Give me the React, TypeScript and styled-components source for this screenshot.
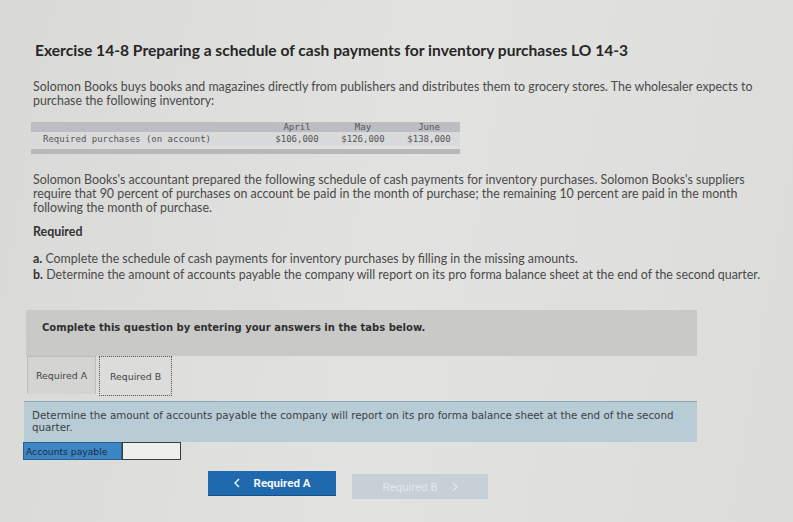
import React, { ReactElement } from 'react';
import styled, { createGlobalStyle } from 'styled-components';

const GlobalStyle = createGlobalStyle`
    html, body {
        margin: 0;
        padding: 0;
        background: #dededc;
    }
`;

const Page = styled.div`
    width: 793px;
    height: 522px;
    overflow: hidden;
    box-sizing: border-box;
    padding: 40px 0 0 0;
    background: linear-gradient(100deg, #d9d9d7 0%, #e2e2e0 50%, #dcdcda 100%);
    font-family: Lato, 'Open Sans', sans-serif;
    color: #4a4a4a;
`;

const Intro = styled.div`
    padding-left: 33px;
`;

const Title = styled.h1`
    margin: 0 0 0 2px;
    font-size: 15.6px;
    line-height: 20px;
    font-weight: 700;
    color: #262626;
`;

const Text = styled.div<{ $top: number }>`
    margin: ${(p) => p.$top}px 0 0 0;
    font-size: 12.4px;
    line-height: 14px;
`;

const Line = styled.div`
    white-space: nowrap;
`;

const Heading = styled.div`
    margin-top: 10px;
    font-size: 12.4px;
    line-height: 14px;
    font-weight: 700;
    color: #333;
`;

const List = styled.div`
    margin-top: 12px;
    font-size: 12.4px;
    line-height: 16px;
    white-space: nowrap;
`;

const Letter = styled.b`
    color: #333;
`;

const Table = styled.div`
    margin: 14px 0 0 -2px;
    width: 429px;
    font-family: 'DejaVu Sans Mono', 'Liberation Mono', monospace;
    font-size: 9px;
    color: #555;
`;

const TableRow = styled.div<{ $bg: string; $h: number }>`
    display: grid;
    grid-template-columns: 1fr 46px 46px 46px;
    column-gap: 20px;
    align-items: center;
    height: ${(p) => p.$h}px;
    background: ${(p) => p.$bg};
    padding: 0 8px 0 12px;
`;

const Cell = styled.span`
    text-align: center;
`;

const BottomBar = styled.div`
    margin-top: 3px;
    height: 5px;
    background: #b6b9bc;
`;

const Work = styled.div`
    margin: 0 0 0 26px;
    width: 671px;
    font-family: 'DejaVu Sans', Verdana, sans-serif;
`;

const Instruction = styled.div`
    box-sizing: border-box;
    margin-top: 27px;
    height: 46px;
    background: #c9c9c8;
    padding: 12px 0 0 16px;
    font-size: 10px;
    line-height: 12px;
    font-weight: 700;
    color: #2f2f2f;
`;

const Tabs = styled.div`
    display: flex;
    gap: 3px;
    margin-left: 1px;
    height: 40px;
`;

const Tab = styled.div<{ $active?: boolean }>`
    box-sizing: border-box;
    width: ${(p) => (p.$active ? 73 : 69)}px;
    height: ${(p) => (p.$active ? 40 : 38)}px;
    display: flex;
    align-items: center;
    justify-content: center;
    font-size: 9.4px;
    color: #444;
    background: ${(p) => (p.$active ? '#dcdcdb' : '#d4d4d3')};
    border: ${(p) => (p.$active ? '1px dotted #555' : '1px solid #bdbdbd')};
    border-bottom: ${(p) => (p.$active ? '1px dotted #555' : 'none')};
`;

const Prompt = styled.div`
    margin-top: 5px;
    margin-left: -2px;
    box-sizing: border-box;
    height: 41px;
    background: #b8ccd6;
    border-top: 1px solid #8ea7b4;
    padding: 7px 0 0 8px;
    font-size: 10.3px;
    line-height: 12px;
    color: #3a3f44;
`;

const AnswerRow = styled.div`
    display: flex;
    margin: 0 0 0 -3px;
    height: 18px;
`;

const AnswerLabel = styled.div`
    box-sizing: border-box;
    width: 99px;
    background: #3d86c6;
    border: 1px solid #2a5f8f;
    display: flex;
    align-items: center;
    padding-left: 2px;
    font-size: 9.2px;
    color: #1d2d3c;
`;

const AnswerInput = styled.input`
    box-sizing: border-box;
    width: 59px;
    height: 18px;
    margin: 0;
    border: 1px solid #3b3b3b;
    background: #eeeeec;
`;

const Nav = styled.div`
    display: flex;
    gap: 16px;
    margin: 11px 0 0 182px;
    align-items: flex-start;
`;

const NavButton = styled.div<{ $enabled?: boolean }>`
    box-sizing: border-box;
    width: ${(p) => (p.$enabled ? 128 : 136)}px;
    height: 25px;
    margin-top: ${(p) => (p.$enabled ? 0 : 3)}px;
    display: flex;
    align-items: center;
    justify-content: center;
    gap: 14px;
    background: ${(p) => (p.$enabled ? '#1f69ae' : '#c6d0d6')};
    color: ${(p) => (p.$enabled ? '#f4f7fa' : '#e2e8eb')};
    font-family: Roboto, 'Liberation Sans', sans-serif;
    font-size: 11.5px;
    font-weight: ${(p) => (p.$enabled ? 700 : 400)};
    border-bottom: ${(p) => (p.$enabled ? '1px solid #174f85' : 'none')};
`;

const Chevron = styled.svg`
    width: 6px;
    height: 10px;
    flex: none;
`;

const ChevronLeft = (): ReactElement => (
    <Chevron viewBox="0 0 6 10">
        <path d="M5 1 L1 5 L5 9" fill="none" stroke="currentColor" strokeWidth="1.4" />
    </Chevron>
);

const ChevronRight = (): ReactElement => (
    <Chevron viewBox="0 0 6 10">
        <path d="M1 1 L5 5 L1 9" fill="none" stroke="currentColor" strokeWidth="1.2" />
    </Chevron>
);

const months = [
    { month: 'April', amount: '$106,000' },
    { month: 'May', amount: '$126,000' },
    { month: 'June', amount: '$138,000' },
];

const App = (): ReactElement => {
    return (
        <Page>
            <GlobalStyle />
            <Intro>
                <Title>Exercise 14-8 Preparing a schedule of cash payments for inventory purchases LO 14-3</Title>
                <Text $top={20}>
                    <Line>
                        Solomon Books buys books and magazines directly from publishers and distributes them to grocery stores. The wholesaler expects to
                    </Line>
                    <Line>purchase the following inventory:</Line>
                </Text>
                <Table>
                    <TableRow $bg="#babdc1" $h={10}>
                        <span />
                        {months.map(({ month }) => (
                            <Cell key={month}>{month}</Cell>
                        ))}
                    </TableRow>
                    <TableRow $bg="#d9dadb" $h={14}>
                        <span>Required purchases (on account)</span>
                        {months.map(({ month, amount }) => (
                            <Cell key={month}>{amount}</Cell>
                        ))}
                    </TableRow>
                    <BottomBar />
                </Table>
                <Text $top={19}>
                    <Line>
                        Solomon Books's accountant prepared the following schedule of cash payments for inventory purchases. Solomon Books's suppliers
                    </Line>
                    <Line>
                        require that 90 percent of purchases on account be paid in the month of purchase; the remaining 10 percent are paid in the month
                    </Line>
                    <Line>following the month of purchase.</Line>
                </Text>
                <Heading>Required</Heading>
                <List>
                    <div>
                        <Letter>a.</Letter> Complete the schedule of cash payments for inventory purchases by filling in the missing amounts.
                    </div>
                    <div>
                        <Letter>b.</Letter> Determine the amount of accounts payable the company will report on its pro forma balance sheet at the end of the second quarter.
                    </div>
                </List>
            </Intro>
            <Work>
                <Instruction>Complete this question by entering your answers in the tabs below.</Instruction>
                <Tabs>
                    <Tab>Required A</Tab>
                    <Tab $active>Required B</Tab>
                </Tabs>
                <Prompt>
                    Determine the amount of accounts payable the company will report on its pro forma balance sheet at the end of the second
                    <br />
                    quarter.
                </Prompt>
                <AnswerRow>
                    <AnswerLabel>Accounts payable</AnswerLabel>
                    <AnswerInput />
                </AnswerRow>
                <Nav>
                    <NavButton $enabled>
                        <ChevronLeft />
                        <span>Required A</span>
                    </NavButton>
                    <NavButton>
                        <span>Required B</span>
                        <ChevronRight />
                    </NavButton>
                </Nav>
            </Work>
        </Page>
    );
};

export default App;
